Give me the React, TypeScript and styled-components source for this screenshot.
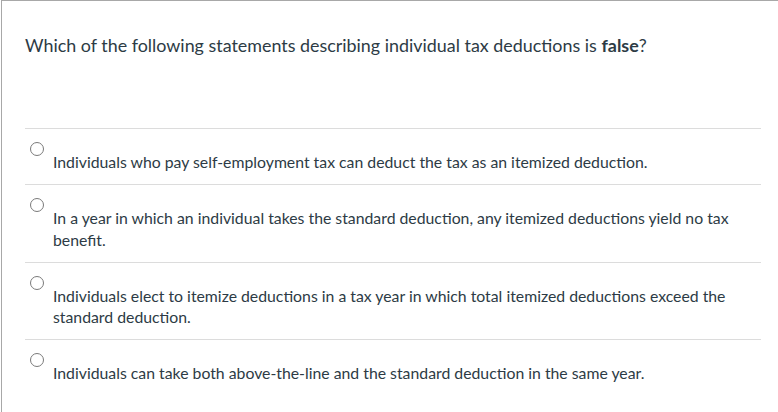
import React from "react";
import styled, { createGlobalStyle } from "styled-components";

const Global = createGlobalStyle`
  html, body { margin: 0; padding: 0; background: #ffffff; }
  body { font-family: Lato, "Noto Sans", sans-serif; color: #2d3b45; }
`;

const Card = styled.div`
  margin-left: 1px;
  min-height: 412px;
  box-sizing: border-box;
  border-top: 1px solid #a8a8a8;
  border-left: 1px solid #a8a8a8;
  padding: 0 17px 0 23px;
`;

const Question = styled.div`
  font-size: 17.9px;
  line-height: 22px;
  padding-top: 33px;
  height: 127px;
  box-sizing: border-box;
  strong { font-weight: 700; }
`;

const List = styled.div`
  display: flex;
  flex-direction: column;
`;

const Row = styled.label`
  display: flex;
  align-items: flex-start;
  border-top: 1px solid #dcdcdc;
  padding: 14px 0 12px 5px;
`;

const Radio = styled.span`
  flex: 0 0 auto;
  width: 14px;
  height: 14px;
  margin-top: -1px;
  box-sizing: border-box;
  border-radius: 50%;
  border: 1px solid #7a7a7a;
  background: #fff;
`;

const Text = styled.span`
  font-size: 15.8px;
  line-height: 21.3px;
  margin-top: 8px;
  padding-left: 9px;
  padding-right: 20px;
`;

const options = [
  "Individuals who pay self-employment tax can deduct the tax as an itemized deduction.",
  "In a year in which an individual takes the standard deduction, any itemized deductions yield no tax benefit.",
  "Individuals elect to itemize deductions in a tax year in which total itemized deductions exceed the standard deduction.",
  "Individuals can take both above-the-line and the standard deduction in the same year.",
];

export default function App() {
  return (
    <>
      <Global />
      <Card>
        <Question>
          Which of the following statements describing individual tax deductions is <strong>false</strong>?
        </Question>
        <List>
          {options.map((o) => (
            <Row key={o}>
              <Radio />
              <Text>{o}</Text>
            </Row>
          ))}
        </List>
      </Card>
    </>
  );
}
